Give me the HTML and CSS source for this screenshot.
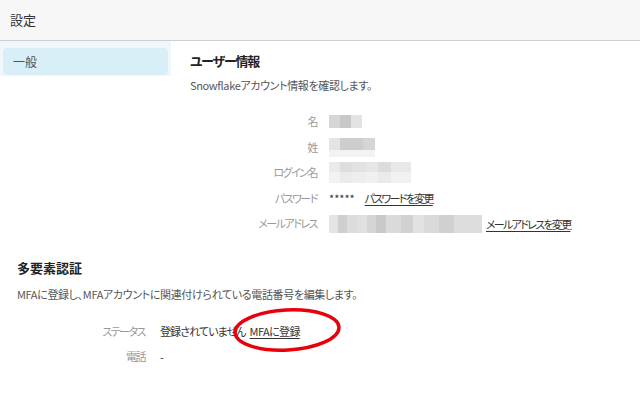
FILE: index.html
```html
<!DOCTYPE html>
<html lang="ja">
<head>
<meta charset="utf-8">
<link rel="stylesheet" href="styles.css">
</head>
<body>
<header class="topbar">設定</header>
<div class="layout">
  <nav class="sidebar">
    <div class="nav-item">一般</div>
  </nav>
  <section class="panel">
    <h2 class="title">ユーザー情報</h2>
    <p class="desc">Snowflakeアカウント情報を確認します。</p>
    <div class="fields">
      <div class="label">名</div>
      <div class="value"><span class="blur b-first"></span></div>
      <div class="label">姓</div>
      <div class="value"><span class="blur b-last"></span></div>
      <div class="label">ログイン名</div>
      <div class="value"><span class="blur b-login"></span></div>
      <div class="label">パスワード</div>
      <div class="value"><span class="stars">*****</span> <a class="link">パスワードを変更</a></div>
      <div class="label">メールアドレス</div>
      <div class="value"><span class="blur b-mail"></span><a class="link">メールアドレスを変更</a></div>
    </div>
  </section>
</div>
<section class="mfa">
  <h2 class="title">多要素認証</h2>
  <p class="desc">MFAに登録し、MFAアカウントに関連付けられている電話番号を編集します。</p>
  <div class="fields mfa-fields">
    <div class="label">ステータス</div>
    <div class="value status">登録されていません <span class="mark"><a class="link">MFAに登録</a><svg class="circle" width="116" height="48" viewBox="0 0 116 48"><ellipse cx="58" cy="24" rx="52" ry="20" fill="none" stroke="#e8000b" stroke-width="3.5" transform="rotate(-3 58 24)"/></svg></span></div>
    <div class="label">電話</div>
    <div class="value">-</div>
  </div>
</section>
</body>
</html>
```
FILE: styles.css
```css
* { box-sizing: border-box; }
html, body { margin: 0; padding: 0; background: #fff; }
body {
  font-family: "Noto Sans CJK JP", "Noto Sans", sans-serif;
  font-feature-settings: "palt";
  color: #333;
  width: 640px;
  height: 396px;
  overflow: hidden;
}
.topbar {
  height: 41px;
  background: #f7f7f7;
  border-bottom: 1px solid #cfcfcf;
  font-size: 13px;
  line-height: 40px;
  padding-left: 10px;
  color: #333;
}
.layout { display: flex; align-items: flex-start; }
.sidebar {
  width: 171px;
  background: #eff7fa;
  padding: 7px 3px 1px 3px;
}
.nav-item {
  height: 27px;
  line-height: 27px;
  background: #d8eff7;
  border-radius: 4px;
  padding-left: 10px;
  font-size: 12px;
  color: #555;
}
.panel { padding: 10px 0 0 19px; flex: 1; }
.title {
  margin: 0;
  font-size: 13px;
  font-weight: 700;
  color: #222;
  line-height: 20px;
  letter-spacing: -1.2px;
}
.mfa .title { letter-spacing: 0; }
.desc {
  margin: 5px 0 0;
  font-size: 11px;
  line-height: 18px;
  color: #555;
  letter-spacing: -0.35px;
}
.fields {
  display: grid;
  grid-template-columns: 127px auto;
  column-gap: 12px;
  row-gap: 0;
  margin-top: 15px;
  align-items: center;
}
.label {
  text-align: right;
  font-size: 11px;
  color: #999;
  height: 25.5px;
  line-height: 25.5px;
  letter-spacing: -1.5px;
}
.value {
  font-size: 11px;
  color: #333;
  height: 25.5px;
  display: flex;
  align-items: center;
  gap: 4px;
  letter-spacing: -0.8px;
}
.value.status { letter-spacing: -0.9px; gap: 0; }
.stars { font-size: 11px; margin-right: 6px; letter-spacing: 0; }
.link {
  color: #333;
  text-decoration: underline;
  text-underline-offset: 2px;
  letter-spacing: -1.7px;
}
.status .link { letter-spacing: -0.6px; }
.mark { position: relative; display: inline-block; line-height: 16px; margin-left: 4px; }
.circle {
  position: absolute;
  left: -21px;
  top: -17px;
}
.blur {
  display: block;
  filter: blur(0.6px);
}
.b-first {
  width: 33px; height: 13px;
  background: linear-gradient(90deg, #d6d6d6 0 33%, #c8c8c8 33% 66%, #e3e3e3 66%);
}
.b-last {
  width: 46px; height: 19px;
  background:
    linear-gradient(180deg, transparent 0 65%, #f3f3f3 65%),
    linear-gradient(90deg, #e4e4e4 0 25%, #cdcdcd 25% 75%, #d5d5d5 75%);
}
.b-login {
  width: 82px; height: 21px;
  background:
    linear-gradient(180deg, transparent 0 50%, rgba(255,255,255,0.4) 50%),
    linear-gradient(90deg, #eaeaea 0 14%, #dedede 14% 28%, #e2e2e2 28% 45%, #e6e6e6 45% 60%, #dcdcdc 60% 75%, #e8e8e8 75%);
}
.b-mail {
  width: 153px; height: 18px;
  margin-right: 0;
  background: linear-gradient(90deg, #e4e4e4 0 6%, #cfcfcf 6% 12%, #dcdcdc 12% 18%, #e1e1e1 18% 25%, #d5d5d5 25% 31%, #c9c9c9 31% 37%, #dadada 37% 47%, #d2d2d2 47% 55%, #e2e2e2 55% 62%, #dadada 62% 72%, #d0d0d0 72% 82%, #dddddd 82%);
}
.mfa {
  padding: 21px 0 0 17px;
}
.mfa .desc { margin-top: 7px; }
.mfa-fields {
  grid-template-columns: 128px auto;
  column-gap: 15px;
  margin-top: 16px;
}
```
